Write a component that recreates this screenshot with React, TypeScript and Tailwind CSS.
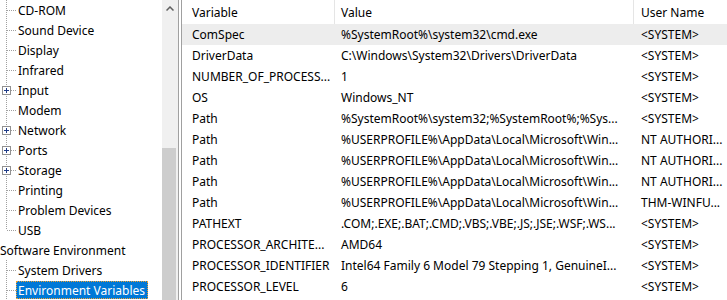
import React from 'react';

type TreeItem = { label: string; expand?: boolean; last?: boolean; root?: boolean; selected?: boolean };

const tree: TreeItem[] = [
  { label: 'CD-ROM' },
  { label: 'Sound Device' },
  { label: 'Display' },
  { label: 'Infrared' },
  { label: 'Input', expand: true },
  { label: 'Modem' },
  { label: 'Network', expand: true },
  { label: 'Ports', expand: true },
  { label: 'Storage', expand: true },
  { label: 'Printing' },
  { label: 'Problem Devices' },
  { label: 'USB', last: true },
  { label: 'Software Environment', root: true },
  { label: 'System Drivers' },
  { label: 'Environment Variables', selected: true },
];

const rows = [
  ['ComSpec', '%SystemRoot%\\system32\\cmd.exe', '<SYSTEM>'],
  ['DriverData', 'C:\\Windows\\System32\\Drivers\\DriverData', '<SYSTEM>'],
  ['NUMBER_OF_PROCESS...', '1', '<SYSTEM>'],
  ['OS', 'Windows_NT', '<SYSTEM>'],
  ['Path', '%SystemRoot%\\system32;%SystemRoot%;%Sys...', '<SYSTEM>'],
  ['Path', '%USERPROFILE%\\AppData\\Local\\Microsoft\\Win...', 'NT AUTHORI...'],
  ['Path', '%USERPROFILE%\\AppData\\Local\\Microsoft\\Win...', 'NT AUTHORI...'],
  ['Path', '%USERPROFILE%\\AppData\\Local\\Microsoft\\Win...', 'NT AUTHORI...'],
  ['Path', '%USERPROFILE%\\AppData\\Local\\Microsoft\\Win...', 'THM-WINFU...'],
  ['PATHEXT', '.COM;.EXE;.BAT;.CMD;.VBS;.VBE;.JS;.JSE;.WSF;.WS...', '<SYSTEM>'],
  ['PROCESSOR_ARCHITE...', 'AMD64', '<SYSTEM>'],
  ['PROCESSOR_IDENTIFIER', 'Intel64 Family 6 Model 79 Stepping 1, GenuineI...', '<SYSTEM>'],
  ['PROCESSOR_LEVEL', '6', '<SYSTEM>'],
];

function Connector({ expand, last }: { expand?: boolean; last?: boolean }) {
  return (
    <svg width="16" height="20" className="shrink-0">
      <line x1="6.5" y1="0" x2="6.5" y2={last ? 10 : 20} stroke="#a0a0a0" strokeDasharray="1 1" />
      <line x1="7" y1="10.5" x2="16" y2="10.5" stroke="#a0a0a0" strokeDasharray="1 1" />
      {expand && (
        <g>
          <rect x="2.5" y="6.5" width="8" height="8" fill="#fff" stroke="#919191" />
          <line x1="4" y1="10.5" x2="9" y2="10.5" stroke="#1f3c88" />
          <line x1="6.5" y1="8" x2="6.5" y2="13" stroke="#1f3c88" />
        </g>
      )}
    </svg>
  );
}

export default function App() {
  return (
    <div className="flex h-[300px] w-[727px] overflow-hidden bg-white text-[12px] text-black" style={{ fontFamily: '"Noto Sans", sans-serif' }}>
      <div className="w-[162px] shrink-0 overflow-hidden">
        {tree.map(item => (
          <div key={item.label} className="flex h-5 items-center whitespace-nowrap">
            {item.root ? (
              <span className="-ml-[2px] px-[2px] pt-px">{item.label}</span>
            ) : (
              <>
                <Connector expand={item.expand} last={item.last} />
                <span
                  className={
                    item.selected
                      ? 'flex h-[18px] items-center border border-dotted border-[#f0a030] bg-[#0078d7] px-[1px] pr-[2px] pt-px text-white'
                      : 'px-[2px] pt-px'
                  }
                >
                  {item.label}
                </span>
              </>
            )}
          </div>
        ))}
      </div>

      <div className="flex w-4 shrink-0 flex-col bg-[#f0f0f0]">
        <div className="flex h-[17px] items-center justify-center">
          <svg width="8" height="5" viewBox="0 0 8 5">
            <path d="M0.5 4.5 L4 1 L7.5 4.5" fill="none" stroke="#606060" strokeWidth="1.5" />
          </svg>
        </div>
        <div className="flex-1" />
        <div className="h-[152px] w-[14px] bg-[#cdcdcd]" />
      </div>

      <div className="w-1 shrink-0 border-x border-[#a0a0a0] bg-white" />

      <div className="min-w-0 flex-1 overflow-hidden">
        <div className="grid h-6 grid-cols-[153px_299px_1fr] items-stretch whitespace-nowrap">
          <div className="flex items-center border-r border-[#e5e5e5] pl-[10px] pt-[2px]">Variable</div>
          <div className="flex items-center border-r border-[#e5e5e5] pl-[6px] pt-[2px]">Value</div>
          <div className="flex items-center pl-[7px] pt-[2px]">User Name</div>
        </div>
        {rows.map((r, idx) => (
          <div
            key={idx}
            className={`grid h-[21px] grid-cols-[153px_299px_1fr] items-center whitespace-nowrap pt-px ${idx === 0 ? 'bg-[#ededed]' : ''}`}
          >
            <div className="overflow-hidden pl-[10px]">{r[0]}</div>
            <div className="overflow-hidden pl-[6px]">{r[1]}</div>
            <div className="overflow-hidden pl-[7px]">{r[2]}</div>
          </div>
        ))}
      </div>
    </div>
  );
}
